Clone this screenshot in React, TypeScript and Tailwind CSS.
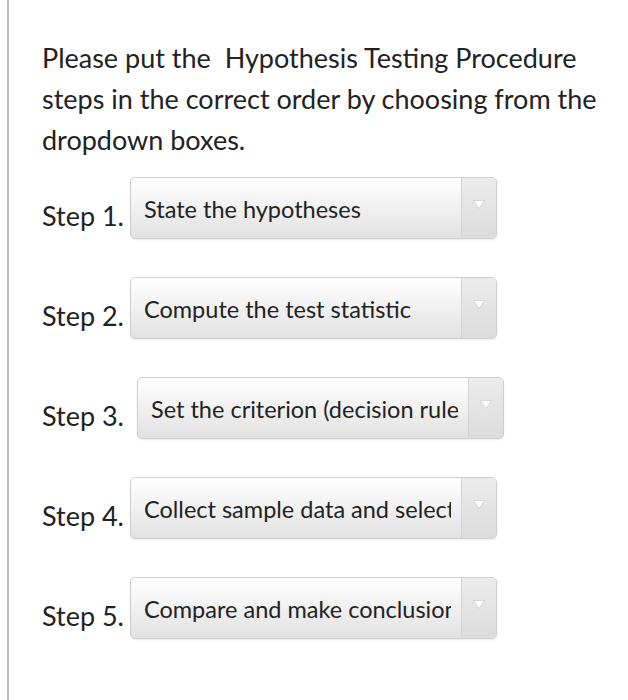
const STEPS: { label: string; value: string; shift?: boolean }[] = [
  { label: "Step 1.", value: "State the hypotheses" },
  { label: "Step 2.", value: "Compute the test statistic" },
  { label: "Step 3.", value: "Set the criterion (decision rule)", shift: true },
  { label: "Step 4.", value: "Collect sample data and select a sample" },
  { label: "Step 5.", value: "Compare and make conclusion" },
];

function Dropdown({ value }: { value: string }) {
  return (
    <div className="flex h-[62px] w-[367px] overflow-hidden rounded-[5px] border border-[#cfcfcf] bg-gradient-to-b from-white to-[#e2e2e2] shadow-[0_1px_2px_rgba(0,0,0,0.08)]">
      <div className="min-w-0 flex-1 whitespace-nowrap pl-[13px] pr-[10px] pt-[18px] text-[23.5px] leading-[26px] text-[#222]">
        <div className="overflow-hidden">{value}</div>
      </div>
      <div className="flex w-[35px] flex-none items-start justify-center border-l border-[#d3d3d3] bg-gradient-to-b from-[#ececec] to-[#dcdcdc] pt-[22px]">
        <svg width="12" height="9" viewBox="0 0 12 9">
          <path d="M0.5 0.5 L11.5 0.5 L6 8.5 Z" fill="#fff" stroke="#c4c4c4" strokeWidth="0.6" />
        </svg>
      </div>
    </div>
  );
}

export default function App() {
  return (
    <div className="min-h-[700px] bg-white font-['Lato',sans-serif]">
      <div className="ml-[7px] min-h-[700px] border-l-2 border-[#bdbdbd] pl-[33px] pt-[37px]">
        <p className="w-[560px] text-[27px] leading-[41px] text-[#222]">
          Please put the&nbsp; Hypothesis Testing Procedure steps in the correct order by choosing from the
          dropdown boxes.
        </p>
        <div className="mt-[17px] flex flex-col gap-[38px]">
          {STEPS.map((s) => (
            <div key={s.label} className="flex items-center">
              <span className="mt-[16px] text-[27px] leading-[30px] text-[#222]">{s.label}</span>
              <div className={s.shift ? "ml-[13px]" : "ml-[6px]"}>
                <Dropdown value={s.value} />
              </div>
            </div>
          ))}
        </div>
      </div>
    </div>
  );
}
